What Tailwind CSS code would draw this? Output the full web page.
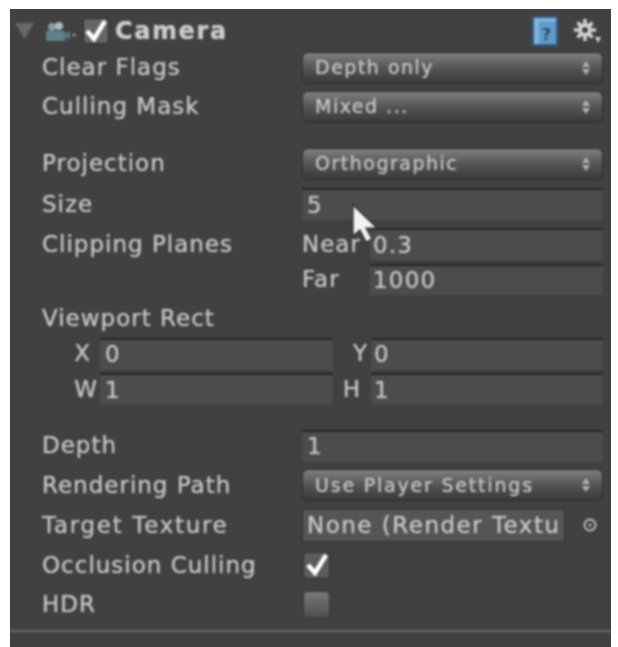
<!DOCTYPE html>
<html><head><meta charset="utf-8">
<script src="https://cdn.jsdelivr.net/npm/@tailwindcss/browser@4"></script>
</head>
<body class="bg-white m-0">
<div class="w-[618px] h-[647px] overflow-hidden bg-white pl-[10px] pt-[9px]">
<div class="w-[601px] h-[638px] overflow-hidden bg-[#414141]">
<div class="relative w-[601px] h-[638px] text-[#c4c4c4] font-['DejaVu_Sans',sans-serif] text-[23px] tracking-[1px] leading-none blur-[0.8px] [text-shadow:0_0_1px_#bdbdbd]">

  <!-- header -->
  <div class="h-[39px] flex items-center pl-[5px] pr-[10px] pt-[5px]">
    <svg width="20" height="18" viewBox="0 0 20 18" class="shrink-0"><path d="M0 1h19L9.500 17z" fill="#696969"/></svg>
    <svg width="34" height="24" viewBox="0 0 34 24" class="ml-[8px] shrink-0"><path d="M3 12h19v10H3z" fill="#5f8189"/><circle cx="9" cy="8" r="4" fill="#7f9ea5"/><circle cx="16" cy="7" r="4" fill="#a8bcc0"/><path d="M22 15l5-3v9l-5-3z" fill="#557780"/><circle cx="31" cy="16" r="1.600" fill="#8ba3a8"/></svg>
    <div class="ml-[6px] w-[26px] h-[26px] rounded-[3px] bg-[#656565] border border-[#2c2c2c] flex items-center justify-center shrink-0">
      <svg width="24" height="22" viewBox="0 0 24 22"><path d="M3 11l7 8L21 1" fill="none" stroke="#fff" stroke-width="4.500"/></svg>
    </div>
    <span class="ml-[6px] font-bold text-[24px] tracking-[1.600px] text-[#cdcdcd]">Camera</span>
    <div class="ml-auto flex items-center gap-[15px]">
      <svg width="28" height="32" viewBox="0 0 28 32"><rect x="1" y="1" width="26" height="30" rx="2" fill="#2f5f8f"/><path d="M3 3h22v26H3z" fill="#7fb4dc"/><path d="M8 7h17v22H8z" fill="#5d9bcb"/><text x="16" y="25" font-size="16" font-weight="bold" font-family="DejaVu Sans" fill="#1f4468" text-anchor="middle">?</text></svg>
      <svg width="27" height="25" viewBox="0 0 27 25"><g fill="none" stroke="#d4d4d4"><circle cx="11" cy="11" r="5" stroke-width="4"/><path d="M11 0v4M11 18v4M0 11h4M18 11h4M3.500 3.500l3 3M15.500 15.500l3 3M18.500 3.500l-3 3M6.500 15.500l-3 3" stroke-width="3.500"/></g><path d="M21 18h6l-3 6z" fill="#d4d4d4"/></svg>
    </div>
  </div>

  <div class="pl-[32px] pr-[8px]">
    <!-- Clear Flags -->
    <div class="h-[39px] flex items-center">
      <span class="w-[260px] shrink-0">Clear Flags</span>
      <div class="flex-1 h-[32px] rounded-[6px] border border-[#2e2e2e] bg-gradient-to-b from-[#808080] via-[#555555] to-[#3a3a3a] flex items-center justify-between pl-[12px] pr-[12px] text-[19px] tracking-[1.500px] text-[#c4c4c4]">
        <span>Depth only</span><svg width="8" height="14" viewBox="0 0 8 14"><path d="M4 0l4 6H0zM4 14l4-6H0z" fill="#b4b4b4"/></svg>
      </div>
    </div>
    <!-- Culling Mask -->
    <div class="h-[39px] flex items-center">
      <span class="w-[260px] shrink-0">Culling Mask</span>
      <div class="flex-1 h-[32px] rounded-[6px] border border-[#2e2e2e] bg-gradient-to-b from-[#808080] via-[#555555] to-[#3a3a3a] flex items-center justify-between pl-[12px] pr-[12px] text-[19px] tracking-[1.500px] text-[#c4c4c4]">
        <span>Mixed ...</span><svg width="8" height="14" viewBox="0 0 8 14"><path d="M4 0l4 6H0zM4 14l4-6H0z" fill="#b4b4b4"/></svg>
      </div>
    </div>
    <!-- Projection -->
    <div class="h-[39px] mt-[18px] flex items-center">
      <span class="w-[260px] shrink-0">Projection</span>
      <div class="flex-1 h-[32px] rounded-[6px] border border-[#2e2e2e] bg-gradient-to-b from-[#808080] via-[#555555] to-[#3a3a3a] flex items-center justify-between pl-[12px] pr-[12px] text-[19px] tracking-[1.500px] text-[#c4c4c4]">
        <span>Orthographic</span><svg width="8" height="14" viewBox="0 0 8 14"><path d="M4 0l4 6H0zM4 14l4-6H0z" fill="#b4b4b4"/></svg>
      </div>
    </div>
    <!-- Size -->
    <div class="h-[40px] mt-[1px] flex items-center">
      <span class="w-[260px] shrink-0">Size</span>
      <div class="flex-1 h-[32px] bg-[#4c4c4c] border-t-2 border-[#262626] flex items-center px-[5px]">5</div>
    </div>
    <!-- Clipping -->
    <div class="h-[40px] flex items-center">
      <span class="w-[260px] shrink-0">Clipping Planes</span>
      <span class="w-[68px] shrink-0">Near</span>
      <div class="flex-1 h-[32px] bg-[#4c4c4c] border-t-2 border-[#262626] flex items-center px-[3px] tracking-[1.200px]">0.3</div>
    </div>
    <div class="h-[31px] flex items-center">
      <span class="w-[260px] shrink-0"></span>
      <span class="w-[68px] shrink-0">Far</span>
      <div class="flex-1 h-[31px] bg-[#4c4c4c] border-t-2 border-[#262626] flex items-center px-[3px] tracking-[1.200px]">1000</div>
    </div>
    <!-- Viewport -->
    <div class="h-[38px] mt-[4px] flex items-center">Viewport Rect</div>
    <div class="h-[33px] flex items-center">
      <span class="w-[58px] shrink-0 text-right pr-[9px]">X</span>
      <div class="w-[233px] h-[32px] bg-[#4c4c4c] border-t-2 border-[#262626] flex items-center px-[5px]">0</div>
      <span class="w-[38px] shrink-0 text-right pr-[3px]">Y</span>
      <div class="flex-1 h-[32px] bg-[#4c4c4c] border-t-2 border-[#262626] flex items-center px-[3px]">0</div>
    </div>
    <div class="h-[36px] mt-[1px] flex items-center">
      <span class="w-[58px] shrink-0 text-right pr-[2px]">W</span>
      <div class="w-[233px] h-[32px] bg-[#4c4c4c] border-t-2 border-[#262626] flex items-center px-[5px]">1</div>
      <span class="w-[38px] shrink-0 text-right pr-[10px]">H</span>
      <div class="flex-1 h-[32px] bg-[#4c4c4c] border-t-2 border-[#262626] flex items-center px-[3px]">1</div>
    </div>
    <!-- Depth -->
    <div class="h-[39px] mt-[19px] flex items-center">
      <span class="w-[260px] shrink-0">Depth</span>
      <div class="flex-1 h-[32px] bg-[#4c4c4c] border-t-2 border-[#262626] flex items-center px-[5px]">1</div>
    </div>
    <!-- Rendering -->
    <div class="h-[40px] flex items-center">
      <span class="w-[260px] shrink-0">Rendering Path</span>
      <div class="flex-1 h-[32px] rounded-[6px] border border-[#2e2e2e] bg-gradient-to-b from-[#808080] via-[#555555] to-[#3a3a3a] flex items-center justify-between pl-[12px] pr-[12px] text-[19px] tracking-[1.800px] text-[#c4c4c4]">
        <span class="whitespace-nowrap">Use Player Settings</span><svg width="8" height="14" viewBox="0 0 8 14"><path d="M4 0l4 6H0zM4 14l4-6H0z" fill="#b4b4b4"/></svg>
      </div>
    </div>
    <!-- Target -->
    <div class="h-[40px] flex items-center">
      <span class="w-[260px] shrink-0 whitespace-nowrap tracking-[1.700px]">Target Texture</span>
      <div class="w-[263px] h-[33px] bg-[#555555] border border-[#333333] flex items-center pl-[4px] overflow-hidden whitespace-nowrap text-[#c8c8c8] tracking-[1.500px]">None (Render Textu</div>
      <svg width="16" height="16" viewBox="0 0 16 16" class="ml-[17px] shrink-0"><circle cx="8" cy="8" r="5.500" fill="none" stroke="#c4c4c4" stroke-width="1.800"/><circle cx="8" cy="8" r="1.500" fill="#c4c4c4"/></svg>
    </div>
    <!-- Occlusion -->
    <div class="h-[40px] flex items-center">
      <span class="w-[261px] shrink-0 whitespace-nowrap">Occlusion Culling</span>
      <div class="w-[27px] h-[27px] rounded-[4px] bg-[#5c5c5c] border border-[#333333] flex items-center justify-center">
        <svg width="24" height="22" viewBox="0 0 24 22"><path d="M3 11l7 8L21 1" fill="none" stroke="#fff" stroke-width="4.500"/></svg>
      </div>
    </div>
    <!-- HDR -->
    <div class="h-[39px] flex items-center">
      <span class="w-[261px] shrink-0">HDR</span>
      <div class="w-[27px] h-[27px] rounded-[4px] bg-gradient-to-b from-[#7a7a7a] to-[#4f4f4f] border border-[#3a3a3a]"></div>
    </div>
  </div>
  <div class="h-[2px] mt-[6px] bg-[#6b6b6b]"></div>

  <!-- mouse cursor -->
  <svg width="36" height="46" viewBox="0 0 36 46" class="absolute left-[340px] top-[194px]"><path d="M3 2v31l7-6 6 12 6-3-6-11h11z" fill="#f2f2f2" stroke="#2a2a2a" stroke-width="1.200"/></svg>
</div>
</div>
</div>
</body></html>
